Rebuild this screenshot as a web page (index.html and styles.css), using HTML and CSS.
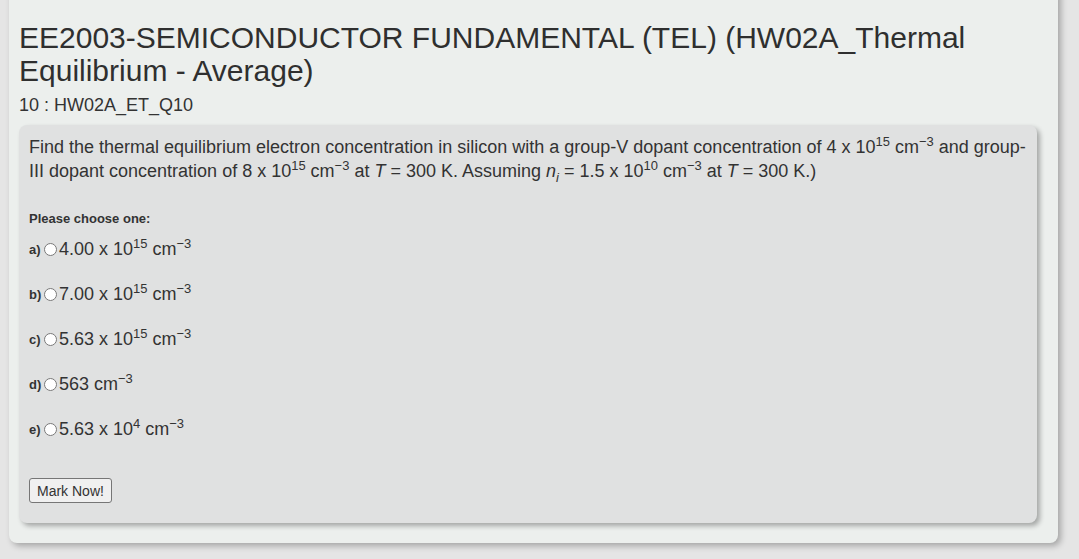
FILE: index.html
```html
<!DOCTYPE html>
<html>
<head>
<meta charset="utf-8">
<link rel="stylesheet" href="styles.css">
</head>
<body>
<div class="card">
  <h1 class="title">EE2003-SEMICONDUCTOR FUNDAMENTAL (TEL) (HW02A_Thermal Equilibrium - Average)</h1>
  <div class="qname">10 : HW02A_ET_Q10</div>
  <div class="qbox">
    <p class="qtext">Find the thermal equilibrium electron concentration in silicon with a group-V dopant concentration of 4 x 10<span class="sup">15</span> cm<span class="sup">&minus;3</span> and group-III dopant concentration of 8 x 10<span class="sup">15</span> cm<span class="sup">&minus;3</span> at <i>T</i> = 300 K. Assuming <i>n<span class="sub">i</span></i> = 1.5 x 10<span class="sup">10</span> cm<span class="sup">&minus;3</span> at <i>T</i> = 300 K.)</p>
    <div class="prompt">Please choose one:</div>
    <div class="options">
      <label class="opt"><span class="letter">a)</span><input type="radio" name="ans" class="radio"><span class="val">4.00 x 10<span class="sup">15</span> cm<span class="sup">&minus;3</span></span></label>
      <label class="opt"><span class="letter">b)</span><input type="radio" name="ans" class="radio"><span class="val">7.00 x 10<span class="sup">15</span> cm<span class="sup">&minus;3</span></span></label>
      <label class="opt"><span class="letter">c)</span><input type="radio" name="ans" class="radio"><span class="val">5.63 x 10<span class="sup">15</span> cm<span class="sup">&minus;3</span></span></label>
      <label class="opt"><span class="letter">d)</span><input type="radio" name="ans" class="radio"><span class="val">563 cm<span class="sup">&minus;3</span></span></label>
      <label class="opt"><span class="letter">e)</span><input type="radio" name="ans" class="radio"><span class="val">5.63 x 10<span class="sup">4</span> cm<span class="sup">&minus;3</span></span></label>
    </div>
    <button class="mark">Mark Now!</button>
  </div>
</div>
</body>
</html>
```

FILE: styles.css
```css
html, body {
  margin: 0;
  padding: 0;
}
body {
  background: #e5e5e5;
  font-family: "Liberation Sans", Arial, sans-serif;
  color: #333;
  height: 559px;
  overflow: hidden;
}
.card {
  width: 1049px;
  box-sizing: border-box;
  margin: -10px 0 0 9px;
  padding: 31px 21px 20px 10px;
  background: #ecefed;
  border-radius: 0 0 8px 8px;
  box-shadow: 3px 3px 6px rgba(0, 0, 0, 0.28);
}
.title {
  margin: 0;
  font-size: 30px;
  line-height: 33px;
  font-weight: normal;
  color: #2f2f2f;
}
.qname {
  margin-top: 8px;
  font-size: 18px;
  line-height: 20px;
  color: #333;
}
.qbox {
  margin-top: 10px;
  background: #e0e1e1;
  border-radius: 8px;
  padding: 10px 10px 20px 10px;
  box-shadow: 3px 3px 5px rgba(0, 0, 0, 0.3);
}
.qtext {
  margin: 0;
  font-size: 18px;
  line-height: 24px;
  color: #333;
}
.sup {
  font-size: 0.72em;
  vertical-align: super;
  line-height: 0;
}
.sub {
  font-size: 0.72em;
  vertical-align: sub;
  line-height: 0;
}
.prompt {
  margin-top: 28px;
  font-size: 13px;
  line-height: 16px;
  font-weight: bold;
  color: #333;
}
.options {
  margin-top: 10px;
  display: flex;
  flex-direction: column;
  gap: 21px;
}
.opt {
  display: flex;
  align-items: center;
  height: 24px;
}
.letter {
  font-size: 13px;
  font-weight: bold;
  width: 14px;
  color: #333;
}
.radio {
  margin: 0 2px 0 1px;
  width: 13px;
  height: 13px;
}
.val {
  font-size: 18px;
  line-height: 24px;
  color: #333;
}
.mark {
  display: block;
  margin-top: 37px;
  height: 25px;
  padding: 0 7px;
  font-family: "Liberation Sans", Arial, sans-serif;
  font-size: 14px;
  color: #333;
  background: #f0f0f0;
  border: 1px solid #767676;
  border-radius: 3px;
}
```
